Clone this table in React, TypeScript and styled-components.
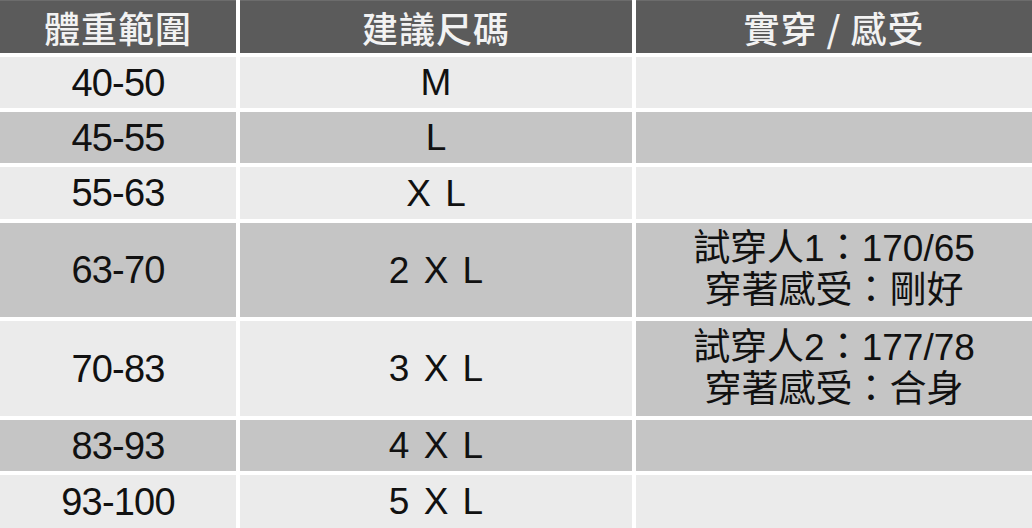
import React from 'react';
import styled, { createGlobalStyle } from 'styled-components';

const GlobalStyle = createGlobalStyle`
  html, body {
    margin: 0;
    padding: 0;
    background: #ffffff;
  }
  body {
    font-family: "Liberation Sans", "Noto Sans CJK TC", sans-serif;
  }
`;

type Tone = 'light' | 'dark';

const Table = styled.div`
  display: grid;
  grid-template-columns: 236px 392px 396px;
  grid-template-rows: 53px 51px 51px 52px 94px 95px 51px 53px;
  gap: 4px;
  width: 1032px;
  height: 528px;
  background: #ffffff;
`;

const HeaderCell = styled.div`
  display: flex;
  align-items: center;
  justify-content: center;
  background: #5b5b5b;
  border-top: 1px solid #6c6c6c;
  color: #f2f2f2;
  font-family: "Noto Sans CJK TC", sans-serif;
  font-size: 36px;
  font-weight: 500;
  letter-spacing: 1px;
`;

const Cell = styled.div<{ $tone: Tone }>`
  display: flex;
  flex-direction: column;
  align-items: center;
  justify-content: center;
  background: ${(p) => (p.$tone === 'dark' ? '#c5c5c5' : '#ebebeb')};
  color: #111111;
  font-size: 37px;
  line-height: 1;
`;

const Range = styled.span`
  font-size: 38px;
  letter-spacing: -0.8px;
`;

const Size = styled.span`
  font-size: 37px;
  word-spacing: 4px;
`;

const NoteLine = styled.div`
  font-family: "Liberation Sans", "Noto Sans CJK TC", sans-serif;
  font-size: 37px;
  line-height: 42px;
  white-space: nowrap;
`;

type Row = {
  range: string;
  size: string;
  tone: Tone;
  noteTone: Tone;
  note?: string[];
};

const rows: Row[] = [
  { range: '40-50', size: 'M', tone: 'light', noteTone: 'light' },
  { range: '45-55', size: 'L', tone: 'dark', noteTone: 'dark' },
  { range: '55-63', size: 'X L', tone: 'light', noteTone: 'light' },
  {
    range: '63-70',
    size: '2 X L',
    tone: 'dark',
    noteTone: 'dark',
    note: ['試穿人1：170/65', '穿著感受：剛好'],
  },
  {
    range: '70-83',
    size: '3 X L',
    tone: 'light',
    noteTone: 'dark',
    note: ['試穿人2：177/78', '穿著感受：合身'],
  },
  { range: '83-93', size: '4 X L', tone: 'dark', noteTone: 'dark' },
  { range: '93-100', size: '5 X L', tone: 'light', noteTone: 'light' },
];

const SizeChart = () => {
  return (
    <>
      <GlobalStyle />
      <Table>
        <HeaderCell>體重範圍</HeaderCell>
        <HeaderCell>建議尺碼</HeaderCell>
        <HeaderCell>實穿 / 感受</HeaderCell>
        {rows.map((row) => (
          <React.Fragment key={row.range}>
            <Cell $tone={row.tone}>
              <Range>{row.range}</Range>
            </Cell>
            <Cell $tone={row.tone}>
              <Size>{row.size}</Size>
            </Cell>
            <Cell $tone={row.noteTone}>
              {row.note?.map((line) => (
                <NoteLine key={line}>{line}</NoteLine>
              ))}
            </Cell>
          </React.Fragment>
        ))}
      </Table>
    </>
  );
};

export default SizeChart;
